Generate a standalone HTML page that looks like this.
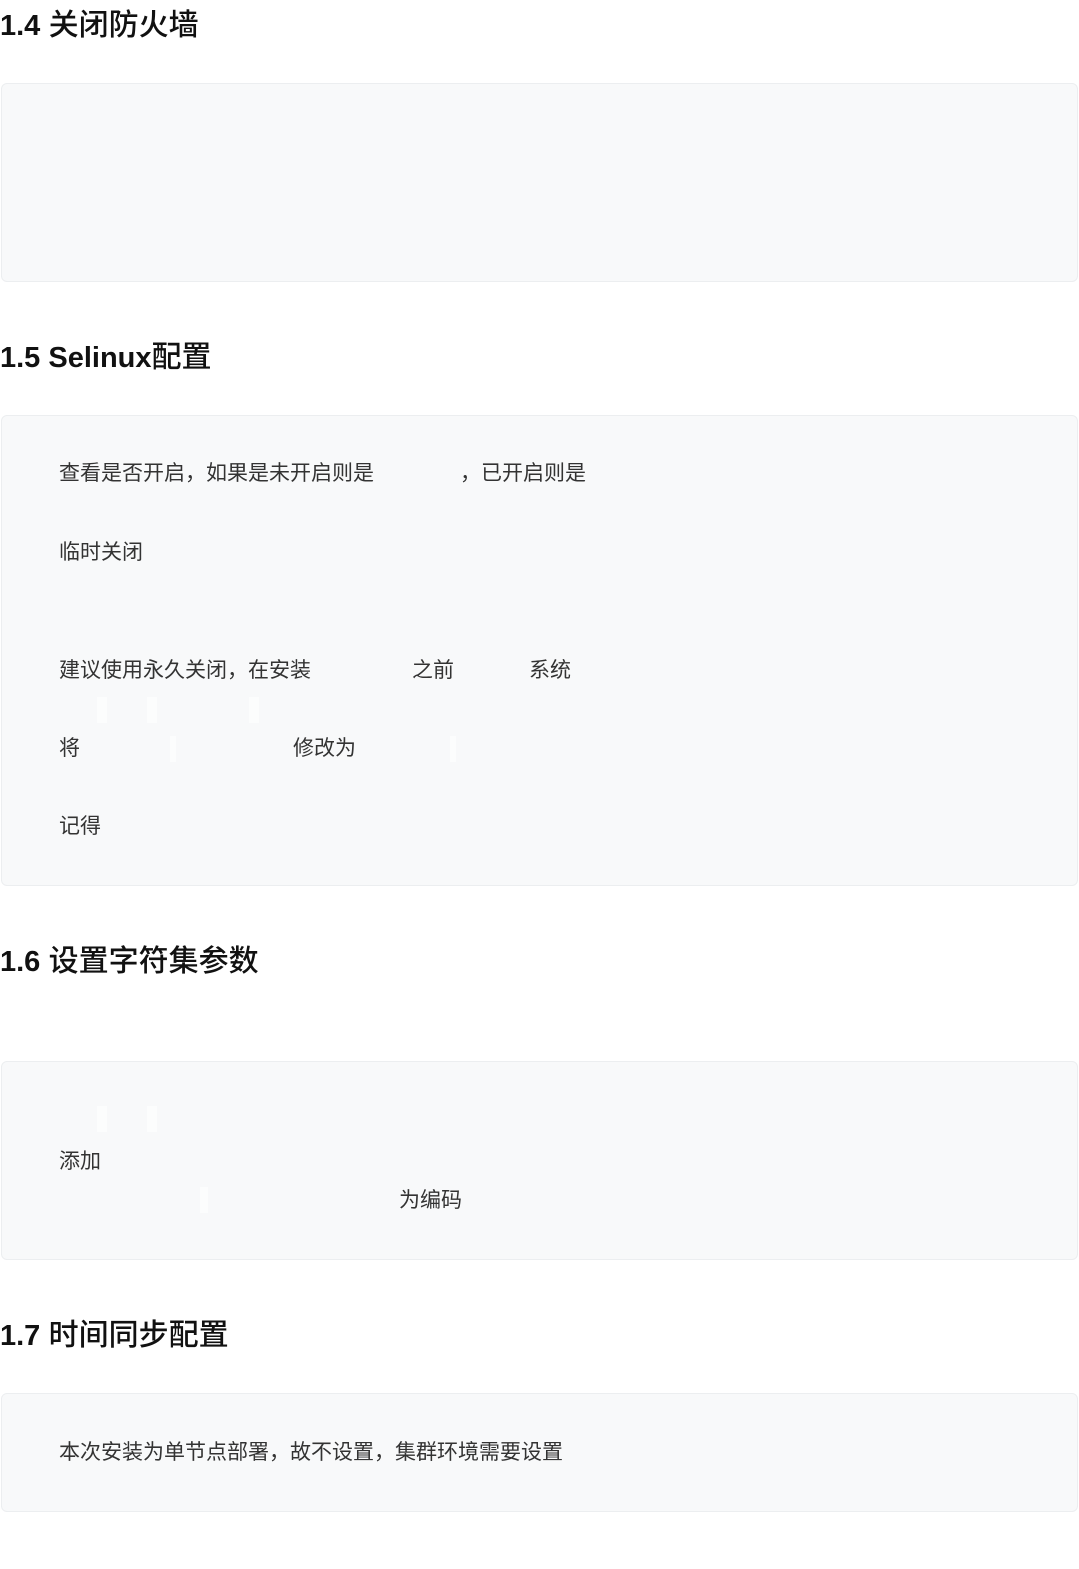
<!DOCTYPE html>
<html><head><meta charset="utf-8"><style>
body{margin:0;width:1079px;height:1569px;background:#fff;position:relative;font-family:"Liberation Sans","Noto Sans CJK SC",sans-serif;overflow:hidden}
.h{position:absolute;left:0;font-size:30px;font-weight:500;color:#111;line-height:36px;white-space:nowrap}
.h b{font-weight:700;font-size:29px}
.box{position:absolute;left:1px;width:1075px;background:#f8f9fa;border:1px solid #eceef0;border-radius:6px}
.t{position:absolute;font-size:21px;color:#333;line-height:24px;white-space:nowrap}
.w{position:absolute;width:10px;height:26px;background:#fff;opacity:.6}
</style></head><body>
<div class="h" style="top:8px"><b>1.4</b> 关闭防火墙</div>
<div class="box" style="top:83px;height:197px"></div>
<div class="h" style="top:340px"><b>1.5 Selinux</b>配置</div>
<div class="box" style="top:415px;height:469px"></div>
<div class="t" style="left:59px;top:462px">查看是否开启，如果是未开启则是</div>
<div class="t" style="left:460px;top:462px">，已开启则是</div>
<div class="t" style="left:59px;top:541px">临时关闭</div>
<div class="t" style="left:59px;top:659px">建议使用永久关闭，在安装</div>
<div class="t" style="left:412px;top:659px">之前</div>
<div class="t" style="left:529px;top:659px">系统</div>
<div class="w" style="left:97px;top:697px"></div><div class="w" style="left:147px;top:697px"></div><div class="w" style="left:249px;top:697px"></div>
<div class="t" style="left:59px;top:737px">将</div>
<div class="t" style="left:293px;top:737px">修改为</div>
<div class="w" style="left:170px;top:736px;width:6px"></div><div class="w" style="left:450px;top:736px;width:6px"></div>
<div class="t" style="left:59px;top:815px">记得</div>
<div class="h" style="top:944px"><b>1.6</b> 设置字符集参数</div>
<div class="box" style="top:1061px;height:197px"></div>
<div class="w" style="left:97px;top:1106px"></div><div class="w" style="left:147px;top:1106px"></div>
<div class="t" style="left:59px;top:1150px">添加</div>
<div class="w" style="left:200px;top:1187px;width:8px"></div>
<div class="t" style="left:399px;top:1189px">为编码</div>
<div class="h" style="top:1318px"><b>1.7</b> 时间同步配置</div>
<div class="box" style="top:1393px;height:117px"></div>
<div class="t" style="left:59px;top:1441px">本次安装为单节点部署，故不设置，集群环境需要设置</div>
</body></html>
